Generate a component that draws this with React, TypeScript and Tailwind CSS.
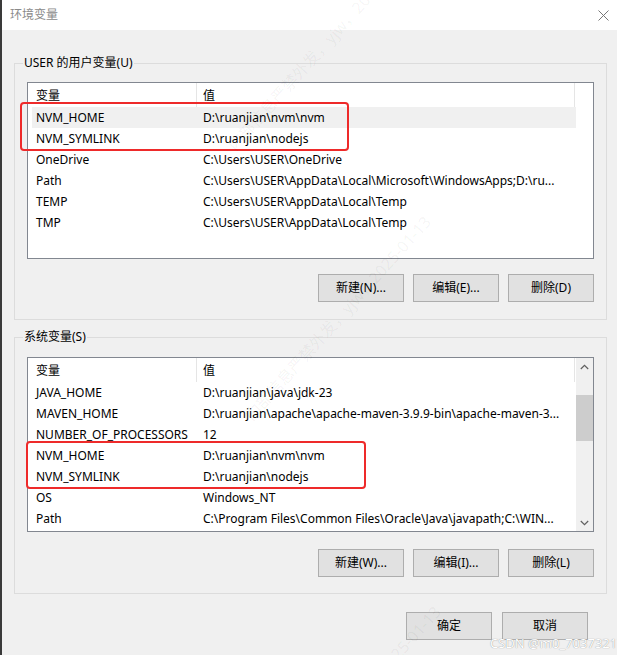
import React from 'react';

type Row = [string, string];

const userVars: Row[] = [
  ['NVM_HOME', 'D:\\ruanjian\\nvm\\nvm'],
  ['NVM_SYMLINK', 'D:\\ruanjian\\nodejs'],
  ['OneDrive', 'C:\\Users\\USER\\OneDrive'],
  ['Path', 'C:\\Users\\USER\\AppData\\Local\\Microsoft\\WindowsApps;D:\\ru...'],
  ['TEMP', 'C:\\Users\\USER\\AppData\\Local\\Temp'],
  ['TMP', 'C:\\Users\\USER\\AppData\\Local\\Temp'],
];

const sysVars: Row[] = [
  ['JAVA_HOME', 'D:\\ruanjian\\java\\jdk-23'],
  ['MAVEN_HOME', 'D:\\ruanjian\\apache\\apache-maven-3.9.9-bin\\apache-maven-3...'],
  ['NUMBER_OF_PROCESSORS', '12'],
  ['NVM_HOME', 'D:\\ruanjian\\nvm\\nvm'],
  ['NVM_SYMLINK', 'D:\\ruanjian\\nodejs'],
  ['OS', 'Windows_NT'],
  ['Path', 'C:\\Program Files\\Common Files\\Oracle\\Java\\javapath;C:\\WIN...'],
];

const Chevron = ({ up }: { up?: boolean }) => (
  <svg width="9" height="6" viewBox="0 0 9 6" className={up ? '' : 'rotate-180'}>
    <path d="M0.8 5 L4.5 1.3 L8.2 5" fill="none" stroke="#606060" strokeWidth="1.2" />
  </svg>
);

const ListView: React.FC<{ rows: Row[]; selected?: number; scroll?: boolean; className: string }> = ({
  rows,
  selected,
  scroll,
  className,
}) => (
  <div className={`mx-[12px] w-[567px] border border-[#828790] bg-white flex overflow-hidden ${className}`}>
    <div className="w-[548px] flex flex-col">
      {/* header */}
      <div className="flex h-[24px] items-center shrink-0">
        <div className="w-[169px] h-full border-r border-[#e5e5e5] pl-[8px] pt-[1px] flex items-center">变量</div>
        <div className="w-[378px] h-full border-r border-[#e5e5e5] pl-[6px] pt-[1px] flex items-center">值</div>
      </div>
      {rows.map(([name, value], i) => (
        <div key={name} className="h-[21px] shrink-0 pl-[4px]">
          <div className={`flex h-full items-center pt-[1px] whitespace-nowrap ${i === selected ? 'bg-[#f0f0f0]' : ''}`}>
            <div className="w-[165px] pl-[4px]">{name}</div>
            <div className="pl-[6px]">{value}</div>
          </div>
        </div>
      ))}
    </div>
    {scroll ? (
      <div className="w-[17px] flex flex-col bg-[#f0f0f0]">
        <div className="h-[17px] flex items-center justify-center">
          <Chevron up />
        </div>
        <div className="flex-1 pt-[20px]">
          <div className="h-[46px] bg-[#cdcdcd]" />
        </div>
        <div className="h-[17px] flex items-center justify-center">
          <Chevron />
        </div>
      </div>
    ) : (
      <div className="flex-1">
        <div className="h-[24px]" />
      </div>
    )}
  </div>
);

const Btn = ({ children }: { children: React.ReactNode }) => (
  <button className="w-[86px] h-[28px] bg-[#e1e1e1] border border-[#adadad] text-black flex items-center justify-center">
    {children}
  </button>
);

const Watermark = ({ left, top }: { left: number; top: number }) => (
  <span
    className="absolute origin-top-left -rotate-[48deg] text-[16px] text-black/[0.05] whitespace-nowrap pointer-events-none"
    style={{ left, top }}
  >
    内部信息严禁外发，yjw，2025-01-13
  </span>
);

export default function App() {
  return (
    <div className="w-[617px] h-[655px] overflow-hidden relative flex bg-[#f0f0f0] text-[12px] text-black font-['Noto_Sans','Noto_Sans_CJK_SC',sans-serif]">
      <div className="w-[2px] bg-[#3a3a3a]" />
      <div className="flex-1 flex flex-col">
        {/* title bar */}
        <div className="h-[30px] bg-white flex items-center justify-between pl-[8px] pr-[8px] shrink-0">
          <span className="text-[#8a8a8a]">环境变量</span>
          <svg width="11" height="11" viewBox="0 0 11 11">
            <path d="M0.5 0.5 L10.5 10.5 M10.5 0.5 L0.5 10.5" stroke="#777" strokeWidth="1" />
          </svg>
        </div>

        <fieldset className="mt-[25px] ml-[12px] w-[592px] border border-[#dcdcdc] pb-[17px]">
          <legend className="ml-[8px] px-[1px] leading-[16px]">USER 的用户变量(U)</legend>
          <ListView rows={userVars} selected={0} className="mt-[11px] h-[177px]" />
          <div className="flex justify-end gap-[9px] mt-[15px] mr-[12px]">
            <Btn>新建(N)...</Btn>
            <Btn>编辑(E)...</Btn>
            <Btn>删除(D)</Btn>
          </div>
        </fieldset>

        <fieldset className="mt-[9px] ml-[12px] w-[592px] border border-[#dcdcdc] pb-[16px]">
          <legend className="ml-[8px] px-[1px] leading-[16px]">系统变量(S)</legend>
          <ListView rows={sysVars} scroll className="mt-[12px] h-[175px]" />
          <div className="flex justify-end gap-[9px] mt-[17px] mr-[12px]">
            <Btn>新建(W)...</Btn>
            <Btn>编辑(I)...</Btn>
            <Btn>删除(L)</Btn>
          </div>
        </fieldset>

        <div className="flex justify-end gap-[10px] mt-[18px] mr-[29px]">
          <Btn>确定</Btn>
          <Btn>取消</Btn>
        </div>
      </div>

      {/* annotations */}
      <div className="absolute left-[20px] top-[102px] w-[329px] h-[49px] border-2 border-[#ee2a2a] rounded-[4px] pointer-events-none" />
      <div className="absolute left-[26px] top-[441px] w-[340px] h-[48px] border-2 border-[#ee2a2a] rounded-[4px] pointer-events-none" />

      <Watermark left={222} top={140} />
      <Watermark left={239} top={410} />
      <Watermark left={249} top={800} />

      <span className="absolute left-[490px] top-[634px] text-[13px] text-white [text-shadow:0_0_1px_#777] whitespace-nowrap">
        CSDN @m0_70373217
      </span>
    </div>
  );
}
